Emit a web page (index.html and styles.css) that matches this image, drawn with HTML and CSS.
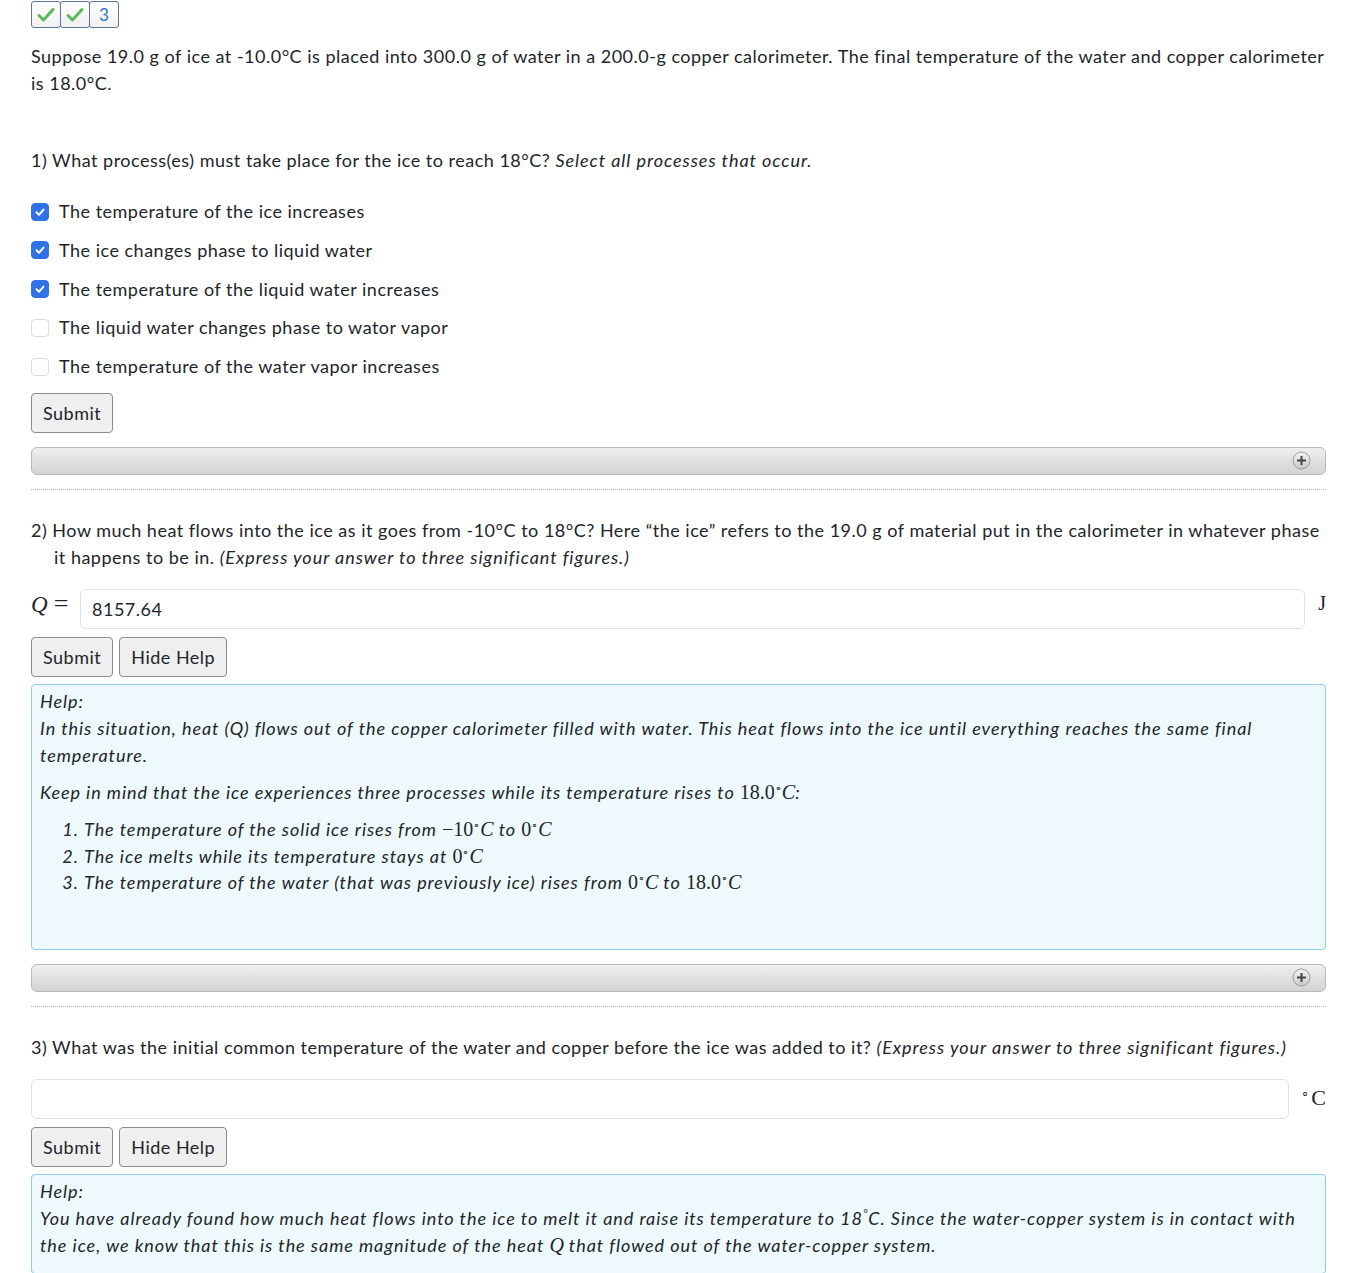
FILE: index.html
```html
<!DOCTYPE html>
<html lang="en-US">
<head>
    <title>Calorimetry</title>
    <link rel="stylesheet" href="styles.css">
</head>
<body>

<div class="page">

    <div class="score">
        <span class="score__box">
            <svg width="18" height="16" viewBox="0 0 18 16"><path d="M2 8.5 L6.5 13 L16 2.5" fill="none" stroke="#5cb85c" stroke-width="3" stroke-linecap="round" stroke-linejoin="round"/></svg>
        </span>
        <span class="score__box">
            <svg width="18" height="16" viewBox="0 0 18 16"><path d="M2 8.5 L6.5 13 L16 2.5" fill="none" stroke="#5cb85c" stroke-width="3" stroke-linecap="round" stroke-linejoin="round"/></svg>
        </span>
        <span class="score__box score__box--num">3</span>
    </div>

    <p class="intro">Suppose 19.0 g of ice at -10.0°C is placed into 300.0 g of water in a 200.0-g copper calorimeter. The final temperature of the water and copper calorimeter is 18.0°C.</p>

    <!-- part 1 -->
    <section class="part part--first">
        <p class="question">1) What process(es) must take place for the ice to reach 18°C? <em>Select all processes that occur.</em></p>

        <ul class="choices">
            <li class="choices__item"><span class="check check--on"></span>The temperature of the ice increases</li>
            <li class="choices__item"><span class="check check--on"></span>The ice changes phase to liquid water</li>
            <li class="choices__item"><span class="check check--on"></span>The temperature of the liquid water increases</li>
            <li class="choices__item"><span class="check"></span>The liquid water changes phase to wator vapor</li>
            <li class="choices__item"><span class="check"></span>The temperature of the water vapor increases</li>
        </ul>

        <div class="actions">
            <button class="btn">Submit</button>
        </div>

        <div class="drawer">
            <svg class="drawer__plus" width="19" height="19" viewBox="0 0 19 19">
                <defs>
                    <linearGradient id="plusbg" x1="0" y1="0" x2="0" y2="1">
                        <stop offset="0" stop-color="#f4f4f4"/>
                        <stop offset="1" stop-color="#c9c9c9"/>
                    </linearGradient>
                </defs>
                <circle cx="9.5" cy="9.5" r="8.5" fill="url(#plusbg)" stroke="#9a9a9a" stroke-width="1"/>
                <path d="M9.5 5 V14 M5 9.5 H14" stroke="#444" stroke-width="2"/>
            </svg>
        </div>
        <div class="rule"></div>
    </section>

    <!-- part 2 -->
    <section class="part">
        <p class="question question--hang">2) How much heat flows into the ice as it goes from -10°C to 18°C? Here “the ice” refers to the 19.0 g of material put in the calorimeter in whatever phase it happens to be in. <em>(Express your answer to three significant figures.)</em></p>

        <div class="answer">
            <span class="answer__label"><i>Q</i><span class="answer__eq">=</span></span>
            <input class="answer__input" type="text" value="8157.64">
            <span class="answer__unit math">J</span>
        </div>

        <div class="actions">
            <button class="btn">Submit</button>
            <button class="btn">Hide Help</button>
        </div>

        <div class="help help--tall">
            <p class="help__line">Help:</p>
            <p class="help__line">In this situation, heat (Q) flows out of the copper calorimeter filled with water. This heat flows into the ice until everything reaches the same final temperature.</p>
            <p class="help__para">Keep in mind that the ice experiences three processes while its temperature rises to <span class="math">18.0<sup>∘</sup><i>C</i></span>:</p>
            <ol class="help__list">
                <li>The temperature of the solid ice rises from <span class="math">−10<sup>∘</sup><i>C</i></span> to <span class="math">0<sup>∘</sup><i>C</i></span></li>
                <li>The ice melts while its temperature stays at <span class="math">0<sup>∘</sup><i>C</i></span></li>
                <li>The temperature of the water (that was previously ice) rises from <span class="math">0<sup>∘</sup><i>C</i></span> to <span class="math">18.0<sup>∘</sup><i>C</i></span></li>
            </ol>
        </div>

        <div class="drawer">
            <svg class="drawer__plus" width="19" height="19" viewBox="0 0 19 19">
                <circle cx="9.5" cy="9.5" r="8.5" fill="url(#plusbg)" stroke="#9a9a9a" stroke-width="1"/>
                <path d="M9.5 5 V14 M5 9.5 H14" stroke="#444" stroke-width="2"/>
            </svg>
        </div>
        <div class="rule"></div>
    </section>

    <!-- part 3 -->
    <section class="part">
        <p class="question">3) What was the initial common temperature of the water and copper before the ice was added to it? <em>(Express your answer to three significant figures.)</em></p>

        <div class="answer">
            <input class="answer__input" type="text" value="">
            <span class="answer__unit answer__unit--deg"><sup>∘</sup>C</span>
        </div>

        <div class="actions">
            <button class="btn">Submit</button>
            <button class="btn">Hide Help</button>
        </div>

        <div class="help">
            <p class="help__line">Help:</p>
            <p class="help__line">You have already found how much heat flows into the ice to melt it and raise its temperature to 18<sup>°</sup>C. Since the water-copper system is in contact with the ice, we know that this is the same magnitude of the heat <span class="math"><i>Q</i></span> that flowed out of the water-copper system.</p>
        </div>
    </section>

</div>

</body>
</html>
```

FILE: styles.css
```css
* {
    box-sizing: border-box;
}

body {
    margin: 0;
    padding: 0;
    background-color: #fff;
    color: #212529;
    font-family: Lato, "Open Sans", sans-serif;
    font-size: 18px;
    line-height: 27px;
    letter-spacing: 0.5px;
}

p {
    margin: 0;
}

em {
    letter-spacing: 0.95px;
}

.page {
    padding: 1px 31px 0;
}

/* score badges */

.score {
    display: flex;
}

.score__box {
    width: 30px;
    height: 27px;
    display: flex;
    align-items: center;
    justify-content: center;
    border: 1px solid #5d7699;
    border-radius: 3px;
    background: linear-gradient(#ffffff, #f1f1f1);
    color: #2f6fcf;
    font-size: 17px;
    letter-spacing: 0;
}

.score__box + .score__box {
    margin-left: -1px;
}

.intro {
    margin-top: 15px;
}

.part--first {
    margin-top: 50px;
}

.part + .part {
    margin-top: 27px;
}

.question--hang {
    padding-left: 23px;
    text-indent: -23px;
}

/* choices */

.choices {
    list-style-type: none;
    margin: 24px 0 0;
    padding: 0;
}

.choices__item {
    display: flex;
    align-items: center;
    height: 27px;
    margin-bottom: 11.75px;
}

.choices__item:last-child {
    margin-bottom: 0;
}

.check {
    width: 18px;
    height: 18px;
    margin-right: 10px;
    border: 1px solid #dcdcdc;
    border-radius: 4px;
    background-color: #fff;
    flex-shrink: 0;
}

.check--on {
    border-color: #2f73e6;
    background-color: #2f73e6;
    background-image: url("data:image/svg+xml,%3Csvg xmlns='http://www.w3.org/2000/svg' viewBox='0 0 16 16'%3E%3Cpath d='M4.5 8.3 L7 10.8 L11.5 5.6' fill='none' stroke='%23fff' stroke-width='2' stroke-linecap='round' stroke-linejoin='round'/%3E%3C/svg%3E");
    background-size: 100% 100%;
}

/* buttons */

.actions {
    display: flex;
    gap: 6px;
    margin-top: 12px;
}

.choices + .actions {
    margin-top: 12.5px;
}

.btn {
    height: 40px;
    padding: 0 11px;
    border: 1px solid #8c8c8c;
    border-radius: 4px;
    background-color: #efefef;
    color: #212529;
    font-family: inherit;
    font-size: 18px;
    letter-spacing: inherit;
    line-height: 1;
}

/* answer row */

.answer {
    display: flex;
    align-items: flex-start;
    margin-top: 18.5px;
}

.answer + .actions {
    margin-top: 8px;
}

.answer__label {
    width: 49px;
    flex-shrink: 0;
    font-family: "Liberation Serif", "Times New Roman", serif;
    font-size: 23px;
    line-height: 30px;
    letter-spacing: 0;
}

.answer__eq {
    margin-left: 6px;
    font-size: 26px;
}

.answer__input {
    flex: 1;
    height: 40px;
    padding: 0 11px;
    border: 1px solid #dee2e6;
    border-radius: 6px;
    color: #212529;
    font-family: inherit;
    font-size: 18px;
    letter-spacing: inherit;
}

.answer__unit {
    width: 21px;
    flex-shrink: 0;
    text-align: right;
    padding-top: 1px;
}

.answer__unit--deg {
    width: 37px;
    padding-top: 5px;
    font-family: "Liberation Serif", "Times New Roman", serif;
    font-size: 22px;
    letter-spacing: 0;
}

.answer__unit--deg sup {
    font-size: 13px;
    line-height: 0;
    vertical-align: 8px;
    margin-right: 2px;
}

.math {
    font-family: "Liberation Serif", "Times New Roman", serif;
    font-style: normal;
    font-size: 20px;
    letter-spacing: 0;
}

.math i {
    font-style: italic;
}

.math sup {
    font-size: 12px;
    line-height: 0;
    vertical-align: 7px;
}

/* help box */

.help {
    margin-top: 7px;
    padding: 3px 8px 14px;
    border: 1px solid #8fcdee;
    border-radius: 4px;
    background-color: #eef9fd;
    font-style: italic;
    letter-spacing: 0.95px;
}

.help .math {
    letter-spacing: 0;
}

.help--tall {
    padding-bottom: 53px;
}

.help__para {
    margin-top: 10px;
}

.help sup {
    font-size: 11px;
    line-height: 0;
}

.help__list {
    margin: 10px 0 0;
    padding-left: 44px;
}

.help__list li {
    line-height: 26.5px;
}

/* collapsed drawer */

.drawer {
    display: flex;
    justify-content: flex-end;
    align-items: center;
    height: 28px;
    margin-top: 14px;
    padding-right: 14px;
    border: 1px solid #b8b8b8;
    border-radius: 6px;
    background: linear-gradient(#efefef, #d3d3d3);
}

.rule {
    margin-top: 14px;
    border-top: 1px dotted #b5b5b5;
}
```
